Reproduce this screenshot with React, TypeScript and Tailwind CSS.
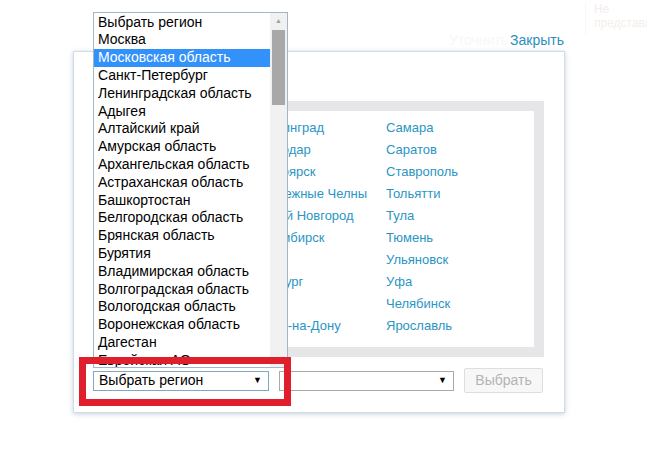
import React from "react"

const regions = [
  "Выбрать регион",
  "Москва",
  "Московская область",
  "Санкт-Петербург",
  "Ленинградская область",
  "Адыгея",
  "Алтайский край",
  "Амурская область",
  "Архангельская область",
  "Астраханская область",
  "Башкортостан",
  "Белгородская область",
  "Брянская область",
  "Бурятия",
  "Владимирская область",
  "Волгоградская область",
  "Вологодская область",
  "Воронежская область",
  "Дагестан",
  "Еврейская АО",
  "Забайкальский край",
]

const cities = [
  ["Москва", "Санкт-Петербург", "Барнаул", "Владивосток", "Волгоград", "Воронеж", "Екатеринбург", "Ижевск", "Иркутск", "Казань"],
  ["Калининград", "Краснодар", "Красноярск", "Набережные Челны", "Нижний Новгород", "Новосибирск", "Омск", "Оренбург", "Пермь", "Ростов-на-Дону"],
  ["Самара", "Саратов", "Ставрополь", "Тольятти", "Тула", "Тюмень", "Ульяновск", "Уфа", "Челябинск", "Ярославль"],
]

const font = { fontFamily: '"Liberation Sans", Arial, sans-serif' }

export default function App() {
  return (
    <div className="relative w-[647px] h-[470px] overflow-hidden bg-white" style={font}>
      {/* faded page behind the dialog */}
      <div className="flex justify-end pt-[2px] pr-[2px]">
        <div className="w-[60px] h-[34px] border-l border-[#fbf6f3] pl-[8px] text-[12px] leading-[14px] text-[#f4eeeb]">
          Не представлено
        </div>
      </div>

      {/* dialog */}
      <div className="absolute left-[73px] top-[28px] flex flex-col w-[492px]">
        <div className="flex justify-end items-center h-[23px] gap-[2px] pr-[1px] text-[14px] leading-[16px]">
          <span className="text-[#f6f8fa]">Уточнить</span>
          <span className="text-[#2b8fbd]">Закрыть</span>
        </div>
        <div className="h-[362px] border border-[#d3dbe5] bg-white shadow-[0_1px_5px_rgba(90,120,160,0.35)] pl-[19px] pt-[49px]">
          <div className="w-[451px] h-[256px] border-[10px] border-[#e6e6e9] bg-white">
            <div className="grid grid-cols-[140px_140px_1fr] pl-[3px] pt-[6px] text-[13px] leading-[22px] text-[#2b95c3]">
              {cities.map((col, i) => (
                <div key={i} className="flex flex-col">
                  {col.map((c) => (
                    <span key={c} className="whitespace-nowrap">{c}</span>
                  ))}
                </div>
              ))}
            </div>
          </div>
          <div className="flex items-center h-[25px] mt-[11px] text-[14px]">
            <div className="flex items-center justify-between w-[176px] h-[20px] border border-[#7fa8c6] pl-[5px] pr-[6px] text-black">
              <span>Выбрать регион</span>
              <span className="text-[9px]">▼</span>
            </div>
            <div className="flex items-center justify-end w-[175px] h-[20px] ml-[10px] border border-[#a9a9a9] pr-[6px]">
              <span className="text-[9px]">▼</span>
            </div>
            <button className="w-[79px] h-[25px] ml-[10px] border border-[#dedede] rounded-[2px] bg-[#f7f7f7] text-[14px] text-[#b3b3b3]">
              Выбрать
            </button>
          </div>
        </div>
      </div>

      {/* opened select list */}
      <div className="absolute left-[93px] top-[12px] w-[195px] h-[356px] flex border border-[#a3b5c9] bg-white overflow-hidden">
        <div className="flex-1 flex flex-col pt-[0.6px] text-[14px] leading-[17.8px] text-black">
          {regions.map((r, i) => (
            <div
              key={r}
              className={
                i === 2
                  ? "pl-[4px] bg-[#3391fa] text-white whitespace-nowrap shrink-0"
                  : "pl-[4px] whitespace-nowrap shrink-0"
              }
            >
              {r}
            </div>
          ))}
        </div>
        <div className="w-[17px] flex flex-col items-center bg-[#f1f1f1]">
          <div className="h-[17px] flex items-center justify-center text-[7px] text-[#a0a0a0]">▲</div>
          <div className="w-[13px] h-[75px] bg-[#a8a8a8]" />
        </div>
      </div>

      {/* red highlight */}
      <div className="absolute left-[79px] top-[357px] w-[212px] h-[49px] border-[7px] border-[#df1f2b]" />
    </div>
  )
}
